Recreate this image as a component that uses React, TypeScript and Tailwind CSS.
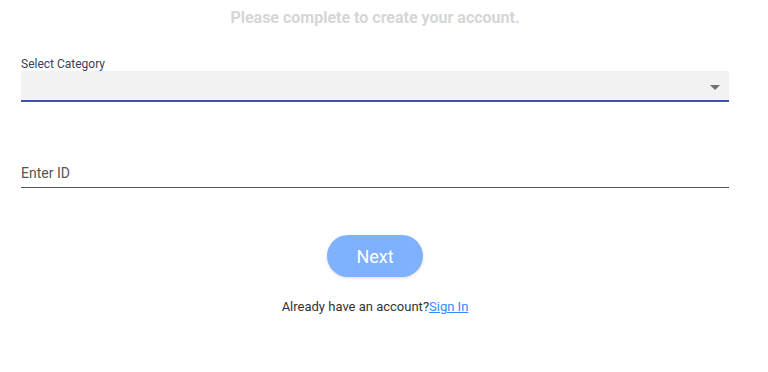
import React from "react";

export default function App() {
  return (
    <div
      className="w-[750px] bg-white h-[372px] px-[21px] pt-[8px]"
      style={{ fontFamily: "Roboto, 'Liberation Sans', sans-serif" }}
    >
      <p className="text-center text-[16px] leading-[20px] font-bold text-[#d6d6d6]">
        Please complete to create your account.
      </p>
      <div className="mt-[29px]">
        <label className="block text-[12px] leading-[14px] text-[#3a3f5c]">Select Category</label>
        <div className="h-[31px] bg-[#f2f2f2] border-b-2 border-[#3f51b5] flex items-center justify-end pr-[9px]">
          <div className="w-0 h-0 border-l-[5px] border-r-[5px] border-t-[5px] border-l-transparent border-r-transparent border-t-[#707070] mt-[4px]" />
        </div>
      </div>
      <div className="mt-[63px]">
        <div className="text-[14px] leading-[16px] text-[#555] pb-[6px] border-b border-[#555]">Enter ID</div>
      </div>
      <div className="flex justify-center mt-[47px]">
        <button className="w-[96px] h-[42px] rounded-full bg-[#7fb1ff] text-white text-[18px] shadow-[0_1px_3px_rgba(0,0,0,0.15)]">
          Next
        </button>
      </div>
      <p className="text-center mt-[22px] text-[13px] leading-[15px] text-[#333]">
        Already have an account?
        <a className="text-[#2f8cff] underline">Sign In</a>
      </p>
    </div>
  );
}
